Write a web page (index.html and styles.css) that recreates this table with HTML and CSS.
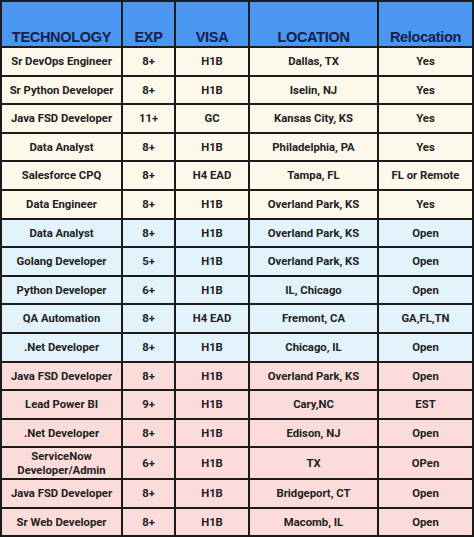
FILE: index.html
```html
<!DOCTYPE html>
<html>
<head>
<meta charset="utf-8">
<link rel="stylesheet" href="styles.css">
</head>
<body>
<div class="grid">
  <div class="h">TECHNOLOGY</div><div class="h">EXP</div><div class="h">VISA</div><div class="h">LOCATION</div><div class="h">Relocation</div>

  <div class="c y">Sr DevOps Engineer</div><div class="c y">8+</div><div class="c y">H1B</div><div class="c y">Dallas, TX</div><div class="c y">Yes</div>
  <div class="c y">Sr Python Developer</div><div class="c y">8+</div><div class="c y">H1B</div><div class="c y">Iselin, NJ</div><div class="c y">Yes</div>
  <div class="c y">Java FSD Developer</div><div class="c y">11+</div><div class="c y">GC</div><div class="c y">Kansas City, KS</div><div class="c y">Yes</div>
  <div class="c y">Data Analyst</div><div class="c y">8+</div><div class="c y">H1B</div><div class="c y">Philadelphia, PA</div><div class="c y">Yes</div>
  <div class="c y">Salesforce CPQ</div><div class="c y">8+</div><div class="c y">H4 EAD</div><div class="c y">Tampa, FL</div><div class="c y">FL or Remote</div>
  <div class="c y">Data Engineer</div><div class="c y">8+</div><div class="c y">H1B</div><div class="c y">Overland Park, KS</div><div class="c y">Yes</div>

  <div class="c b">Data Analyst</div><div class="c b">8+</div><div class="c b">H1B</div><div class="c b">Overland Park, KS</div><div class="c b">Open</div>
  <div class="c b">Golang Developer</div><div class="c b">5+</div><div class="c b">H1B</div><div class="c b">Overland Park, KS</div><div class="c b">Open</div>
  <div class="c b">Python Developer</div><div class="c b">6+</div><div class="c b">H1B</div><div class="c b">IL, Chicago</div><div class="c b">Open</div>
  <div class="c b">QA Automation</div><div class="c b">8+</div><div class="c b">H4 EAD</div><div class="c b">Fremont, CA</div><div class="c b">GA,FL,TN</div>
  <div class="c b">.Net Developer</div><div class="c b">8+</div><div class="c b">H1B</div><div class="c b">Chicago, IL</div><div class="c b">Open</div>

  <div class="c p">Java FSD Developer</div><div class="c p">8+</div><div class="c p">H1B</div><div class="c p">Overland Park, KS</div><div class="c p">Open</div>
  <div class="c p">Lead Power BI</div><div class="c p">9+</div><div class="c p">H1B</div><div class="c p">Cary,NC</div><div class="c p">EST</div>
  <div class="c p">.Net Developer</div><div class="c p">8+</div><div class="c p">H1B</div><div class="c p">Edison, NJ</div><div class="c p">Open</div>
  <div class="c p">ServiceNow<br>Developer/Admin</div><div class="c p">6+</div><div class="c p">H1B</div><div class="c p">TX</div><div class="c p">OPen</div>
  <div class="c p">Java FSD Developer</div><div class="c p">8+</div><div class="c p">H1B</div><div class="c p">Bridgeport, CT</div><div class="c p">Open</div>
  <div class="c p">Sr Web Developer</div><div class="c p">8+</div><div class="c p">H1B</div><div class="c p">Macomb, IL</div><div class="c p">Open</div>
</div>
</body>
</html>
```
FILE: styles.css
```css
html, body {
  margin: 0;
  padding: 0;
  background: #ffffff;
}
.grid {
  width: 474px;
  height: 537px;
  box-sizing: border-box;
  display: grid;
  grid-template-columns: 119px 51px 72px 127px 93px;
  grid-template-rows: 44px repeat(14, 26.6px) 29.6px 26.6px 26.6px;
  gap: 2px;
  padding: 2px;
  background: #1b1b1b;
}
.h {
  background: #4a96f0;
  color: #16214a;
  font-family: "Liberation Sans", Arial, sans-serif;
  font-weight: 700;
  font-size: 14.5px;
  letter-spacing: -0.3px;
  display: flex;
  align-items: flex-end;
  justify-content: center;
  padding-bottom: 1px;
}
.c {
  display: flex;
  align-items: center;
  justify-content: center;
  text-align: center;
  font-family: Roboto, "Liberation Sans", sans-serif;
  font-weight: 700;
  font-size: 11.3px;
  line-height: 13.5px;
  color: #222222;
  padding-top: 1px;
}
.y { background: #fcf8ea; }
.b { background: #e2f3fb; }
.p { background: #fcdcda; }
```
